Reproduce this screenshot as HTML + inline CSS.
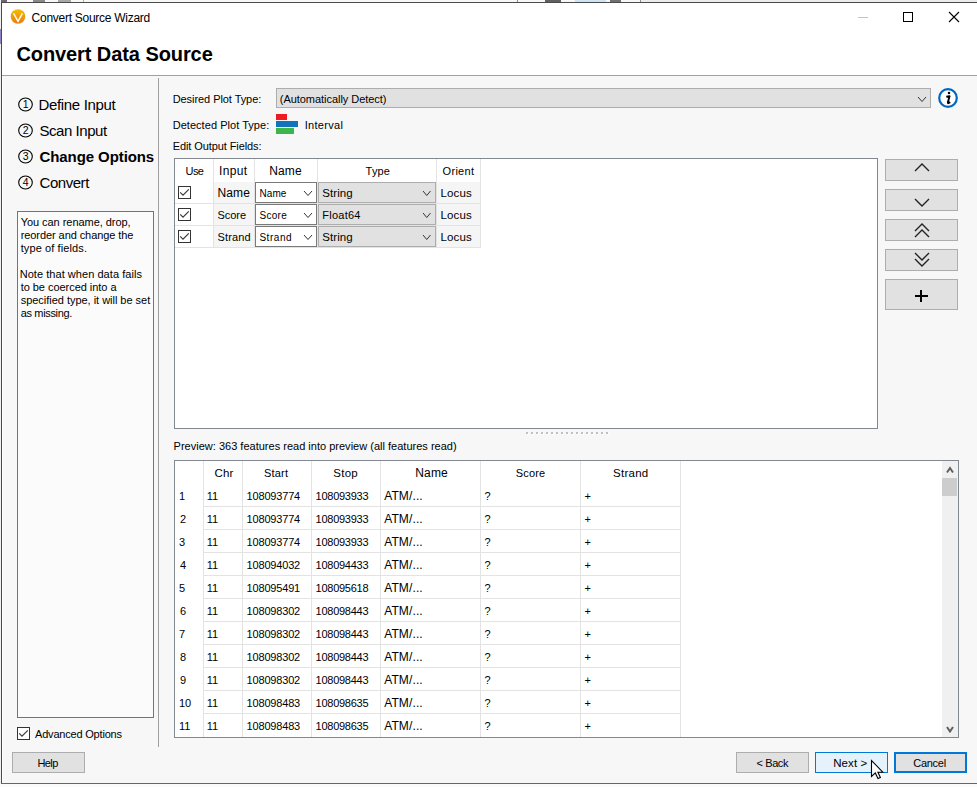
<!DOCTYPE html><html><head><meta charset="utf-8"><style>
html,body{margin:0;padding:0;}
body{width:977px;height:787px;position:relative;overflow:hidden;background:#f0f0f0;font-family:"Liberation Sans",sans-serif;}
.t{position:absolute;white-space:nowrap;line-height:20px;}
.b{position:absolute;box-sizing:border-box;}
</style></head><body>
<div class="b" style="left:0px;top:0px;width:977px;height:2px;background:#f8f8f8;"></div>
<div class="b" style="left:0px;top:0px;width:7px;height:2px;background:#6a6a6a;"></div>
<div class="b" style="left:33px;top:0px;width:12px;height:2px;background:#8a8a8a;"></div>
<div class="b" style="left:58px;top:0px;width:13px;height:2px;background:#a8a8a8;"></div>
<div class="b" style="left:83px;top:0px;width:1px;height:2px;background:#b0b0b0;"></div>
<div class="b" style="left:517px;top:0px;width:1px;height:2px;background:#909090;"></div>
<div class="b" style="left:545px;top:0px;width:16px;height:2px;background:#606060;"></div>
<div class="b" style="left:575px;top:0px;width:31px;height:2px;background:#cde4f7;"></div>
<div class="b" style="left:610px;top:0px;width:11px;height:2px;background:#707070;"></div>
<div class="b" style="left:640px;top:0px;width:1px;height:2px;background:#909090;"></div>
<div class="b" style="left:641px;top:0px;width:336px;height:2px;background:#ececec;"></div>
<div class="b" style="left:0px;top:0px;width:1px;height:787px;background:#f0f0f0;"></div>
<div class="b" style="left:0px;top:29px;width:1px;height:15px;background:#8a84c0;"></div>
<div class="b" style="left:1px;top:2px;width:976px;height:782px;background:#4a4a4a;"></div>
<div class="b" style="left:1px;top:783px;width:976px;height:1px;background:#666666;"></div>
<div class="b" style="left:2px;top:3px;width:975px;height:780px;background:#ffffff;"></div>
<div class="b" style="left:3px;top:76px;width:974px;height:707px;background:#f7f7f7;"></div>
<div class="b" style="left:2px;top:75px;width:975px;height:1px;background:#a0a0a0;"></div>
<div class="b" style="left:0px;top:784px;width:977px;height:3px;background:#fbfbfb;"></div>
<svg class="b" style="left:10px;top:9px" width="16" height="16"><defs><linearGradient id="og" x1="0" y1="0" x2="0" y2="1"><stop offset="0" stop-color="#f6bd00"/><stop offset="1" stop-color="#ea7c12"/></linearGradient></defs><circle cx="8" cy="7.5" r="7.3" fill="url(#og)"/><path d="M3.6 4.3 L8 12.4 L12.4 4.3" fill="none" stroke="#fff" stroke-width="1.4"/></svg>
<div class="t" id="t0" style="left:31.60px;top:8px;font-size:12px;letter-spacing:-0.270px;font-weight:normal;color:#000">Convert Source Wizard</div>
<div class="b" style="left:858px;top:17px;width:10px;height:1px;background:#c2c2c2;"></div>
<svg class="b" style="left:902px;top:11px" width="12" height="12"><rect x="1.5" y="1.5" width="9" height="9" fill="none" stroke="#000" stroke-width="1"/></svg>
<svg class="b" style="left:948px;top:11px" width="12" height="12"><path d="M1 1 L11 11 M11 1 L1 11" stroke="#000" stroke-width="1.1"/></svg>
<div class="t" id="t1" style="left:16.40px;top:44px;font-size:20px;letter-spacing:-0.080px;font-weight:bold;color:#000">Convert Data Source</div>
<svg class="b" style="left:18px;top:96.5px" width="15" height="15"><ellipse cx="7.5" cy="7.5" rx="6.8" ry="6.5" fill="none" stroke="#000" stroke-width="1.1"/><text x="7.6" y="11.3" text-anchor="middle" font-family="Liberation Sans" font-size="10.5">1</text></svg>
<div class="t" id="t2" style="left:38.50px;top:95px;font-size:15px;letter-spacing:-0.335px;font-weight:normal;color:#000">Define Input</div>
<svg class="b" style="left:18px;top:122.5px" width="15" height="15"><ellipse cx="7.5" cy="7.5" rx="6.8" ry="6.5" fill="none" stroke="#000" stroke-width="1.1"/><text x="7.6" y="11.3" text-anchor="middle" font-family="Liberation Sans" font-size="10.5">2</text></svg>
<div class="t" id="t3" style="left:39.50px;top:121px;font-size:15px;letter-spacing:-0.450px;font-weight:normal;color:#000">Scan Input</div>
<svg class="b" style="left:18px;top:148.5px" width="15" height="15"><ellipse cx="7.5" cy="7.5" rx="6.8" ry="6.5" fill="none" stroke="#000" stroke-width="1.1"/><text x="7.6" y="11.3" text-anchor="middle" font-family="Liberation Sans" font-size="10.5">3</text></svg>
<div class="t" id="t4" style="left:39.50px;top:147px;font-size:15px;letter-spacing:-0.086px;font-weight:bold;color:#000">Change Options</div>
<svg class="b" style="left:18px;top:174.5px" width="15" height="15"><ellipse cx="7.5" cy="7.5" rx="6.8" ry="6.5" fill="none" stroke="#000" stroke-width="1.1"/><text x="7.6" y="11.3" text-anchor="middle" font-family="Liberation Sans" font-size="10.5">4</text></svg>
<div class="t" id="t5" style="left:39.50px;top:173px;font-size:15px;letter-spacing:-0.450px;font-weight:normal;color:#000">Convert</div>
<div class="b" style="left:17px;top:211px;width:137px;height:507px;background:#fbfbfb;box-shadow:inset 0 0 0 1px #747474;"></div>
<div class="t" id="t6" style="left:20.70px;top:212px;font-size:11px;letter-spacing:-0.050px;font-weight:normal;color:#000">You can rename, drop,</div>
<div class="t" id="t7" style="left:20.70px;top:225px;font-size:11px;letter-spacing:-0.076px;font-weight:normal;color:#000">reorder and change the</div>
<div class="t" id="t8" style="left:20.70px;top:238px;font-size:11px;letter-spacing:0.104px;font-weight:normal;color:#000">type of fields.</div>
<div class="t" id="t9" style="left:19.70px;top:264px;font-size:11px;letter-spacing:0.048px;font-weight:normal;color:#000">Note that when data fails</div>
<div class="t" id="t10" style="left:20.70px;top:277px;font-size:11px;letter-spacing:-0.041px;font-weight:normal;color:#000">to be coerced into a</div>
<div class="t" id="t11" style="left:20.70px;top:290px;font-size:11px;letter-spacing:-0.025px;font-weight:normal;color:#000">specified type, it will be set</div>
<div class="t" id="t12" style="left:20.70px;top:303px;font-size:11px;letter-spacing:-0.338px;font-weight:normal;color:#000">as missing.</div>
<svg class="b" style="left:17px;top:727px" width="13" height="13"><rect x="0.5" y="0.5" width="12" height="12" fill="#fff" stroke="#333"/><path d="M2.2 6.4 L5 9.2 L10.8 3.4" fill="none" stroke="#3a3a3a" stroke-width="1.2"/></svg>
<div class="t" id="t13" style="left:35.00px;top:724px;font-size:11px;letter-spacing:-0.192px;font-weight:normal;color:#000">Advanced Options</div>
<div class="b" style="left:158px;top:78px;width:1px;height:669px;background:#a0a0a0;"></div>
<div class="b" style="left:12px;top:752px;width:73px;height:21px;background:#e1e1e1;box-shadow:inset 0 0 0 1px #adadad;"></div>
<div class="t" id="t14" style="left:37.50px;top:753px;font-size:11px;letter-spacing:-0.600px;font-weight:normal;color:#000">Help</div>
<div class="b" style="left:736px;top:752px;width:73px;height:21px;background:#e1e1e1;box-shadow:inset 0 0 0 1px #adadad;"></div>
<div class="t" id="t15" style="left:756.50px;top:753px;font-size:11px;letter-spacing:-0.396px;font-weight:normal;color:#000">&lt; Back</div>
<div class="b" style="left:815px;top:752px;width:73px;height:21px;background:#e5f1fb;box-shadow:inset 0 0 0 1px #0078d7;"></div>
<div class="t" id="t16" style="left:833.20px;top:753px;font-size:11.5px;letter-spacing:0.096px;font-weight:normal;color:#000">Next &gt;</div>
<div class="b" style="left:894px;top:752px;width:73px;height:21px;background:#e1e1e1;box-shadow:inset 0 0 0 2px #0078d7;"></div>
<div class="t" id="t17" style="left:913.30px;top:753px;font-size:11px;letter-spacing:-0.288px;font-weight:normal;color:#000">Cancel</div>
<svg class="b" style="left:868px;top:757px" width="20" height="25"><path d="M3.5 3.5 L3.5 19.5 L7.3 15.9 L10 21.5 L12.4 20.5 L9.9 15.2 L14.8 15.2 Z" fill="#fff" stroke="#000" stroke-width="1.1" stroke-linejoin="miter"/></svg>
<div class="t" id="t18" style="left:172.70px;top:89px;font-size:11px;letter-spacing:-0.064px;font-weight:normal;color:#000">Desired Plot Type:</div>
<div class="b" style="left:276px;top:88px;width:655px;height:20px;background:#e1e1e1;box-shadow:inset 0 0 0 1px #adadad;"></div>
<div class="t" id="t19" style="left:279.80px;top:89px;font-size:11px;letter-spacing:-0.043px;font-weight:normal;color:#000">(Automatically Detect)</div>
<svg class="b" style="left:916.0px;top:94.75px" width="12" height="8.5"><path d="M2 2 L6.0 6.5 L10 2" fill="none" stroke="#333" stroke-width="1.0"/></svg>
<svg class="b" style="left:938px;top:88px" width="20" height="20"><circle cx="10" cy="10" r="8.8" fill="#fff" stroke="#0067c0" stroke-width="2.2"/><circle cx="11.0" cy="5.1" r="1.25" fill="#000"/><path d="M8.3 8.7 L11.6 8.1 L9.9 14.3 Q9.6 15.6 10.8 15.0 L12.2 14.1" fill="none" stroke="#000" stroke-width="1.9" stroke-linejoin="round"/></svg>
<div class="t" id="t20" style="left:172.70px;top:115px;font-size:11px;letter-spacing:0.040px;font-weight:normal;color:#000">Detected Plot Type:</div>
<div class="b" style="left:276px;top:114px;width:11px;height:6px;background:#ed1c24;"></div>
<div class="b" style="left:276px;top:121px;width:22px;height:6px;background:#1273bb;"></div>
<div class="b" style="left:276px;top:128px;width:18px;height:6px;background:#3cb54a;"></div>
<div class="t" id="t21" style="left:304.70px;top:115px;font-size:11px;letter-spacing:0.309px;font-weight:normal;color:#000">Interval</div>
<div class="t" id="t22" style="left:172.70px;top:136px;font-size:11px;letter-spacing:-0.090px;font-weight:normal;color:#000">Edit Output Fields:</div>
<div class="b" style="left:174px;top:158px;width:704px;height:271px;background:#fff;box-shadow:inset 0 0 0 1px #828790;"></div>
<div class="b" style="left:213px;top:159px;width:1px;height:89px;background:#e3e3e3;"></div>
<div class="b" style="left:254px;top:159px;width:1px;height:89px;background:#e3e3e3;"></div>
<div class="b" style="left:317px;top:159px;width:1px;height:89px;background:#e3e3e3;"></div>
<div class="b" style="left:436px;top:159px;width:1px;height:89px;background:#e3e3e3;"></div>
<div class="b" style="left:480px;top:159px;width:1px;height:89px;background:#e3e3e3;"></div>
<div class="b" style="left:214px;top:182px;width:40px;height:21px;background:#f5f5f5;"></div>
<div class="b" style="left:437px;top:182px;width:43px;height:21px;background:#f5f5f5;"></div>
<div class="b" style="left:175px;top:203px;width:306px;height:1px;background:#e3e3e3;"></div>
<div class="b" style="left:214px;top:204px;width:40px;height:21px;background:#f5f5f5;"></div>
<div class="b" style="left:437px;top:204px;width:43px;height:21px;background:#f5f5f5;"></div>
<div class="b" style="left:175px;top:225px;width:306px;height:1px;background:#e3e3e3;"></div>
<div class="b" style="left:214px;top:226px;width:40px;height:21px;background:#f5f5f5;"></div>
<div class="b" style="left:437px;top:226px;width:43px;height:21px;background:#f5f5f5;"></div>
<div class="b" style="left:175px;top:247px;width:306px;height:1px;background:#e3e3e3;"></div>
<div class="t" id="t23" style="left:185.60px;top:161px;font-size:11px;letter-spacing:-0.630px;font-weight:normal;color:#000">Use</div>
<div class="t" id="t24" style="left:219.00px;top:161px;font-size:12px;letter-spacing:0.345px;font-weight:normal;color:#000">Input</div>
<div class="t" id="t25" style="left:269.20px;top:161px;font-size:12px;letter-spacing:0.120px;font-weight:normal;color:#000">Name</div>
<div class="t" id="t26" style="left:365.60px;top:161px;font-size:11px;letter-spacing:0.180px;font-weight:normal;color:#000">Type</div>
<div class="t" id="t27" style="left:442.60px;top:161px;font-size:11px;letter-spacing:0.288px;font-weight:normal;color:#000">Orient</div>
<svg class="b" style="left:178px;top:186px" width="13" height="13"><rect x="0.5" y="0.5" width="12" height="12" fill="#fff" stroke="#333"/><path d="M2.2 6.4 L5 9.2 L10.8 3.4" fill="none" stroke="#3a3a3a" stroke-width="1.2"/></svg>
<div class="t" id="t28" style="left:217.50px;top:183px;font-size:12px;letter-spacing:0.120px;font-weight:normal;color:#000">Name</div>
<div class="b" style="left:255px;top:182px;width:62px;height:21px;background:#fff;box-shadow:inset 0 0 0 1px #7a7a7a;"></div>
<div class="t" id="t29" style="left:259.40px;top:184px;font-size:10px;letter-spacing:0.120px;font-weight:normal;color:#000">Name</div>
<svg class="b" style="left:302.0px;top:188.75px" width="12" height="8.5"><path d="M2 2 L6.0 6.5 L10 2" fill="none" stroke="#333" stroke-width="1.0"/></svg>
<div class="b" style="left:318px;top:182px;width:118px;height:21px;background:#e1e1e1;box-shadow:inset 0 0 0 1px #adadad;"></div>
<div class="t" id="t30" style="left:322.30px;top:183px;font-size:11.5px;letter-spacing:0.060px;font-weight:normal;color:#000">String</div>
<svg class="b" style="left:421.25px;top:188.75px" width="11.5" height="8.5"><path d="M2 2 L5.75 6.5 L9.5 2" fill="none" stroke="#333" stroke-width="1.0"/></svg>
<div class="t" id="t31" style="left:440.40px;top:183px;font-size:11.5px;letter-spacing:0.195px;font-weight:normal;color:#000">Locus</div>
<svg class="b" style="left:178px;top:208px" width="13" height="13"><rect x="0.5" y="0.5" width="12" height="12" fill="#fff" stroke="#333"/><path d="M2.2 6.4 L5 9.2 L10.8 3.4" fill="none" stroke="#3a3a3a" stroke-width="1.2"/></svg>
<div class="t" id="t32" style="left:217.50px;top:205px;font-size:11px;letter-spacing:-0.045px;font-weight:normal;color:#000">Score</div>
<div class="b" style="left:255px;top:204px;width:62px;height:21px;background:#fff;box-shadow:inset 0 0 0 1px #7a7a7a;"></div>
<div class="t" id="t33" style="left:259.40px;top:206px;font-size:10px;letter-spacing:0.315px;font-weight:normal;color:#000">Score</div>
<svg class="b" style="left:302.0px;top:210.75px" width="12" height="8.5"><path d="M2 2 L6.0 6.5 L10 2" fill="none" stroke="#333" stroke-width="1.0"/></svg>
<div class="b" style="left:318px;top:204px;width:118px;height:21px;background:#e1e1e1;box-shadow:inset 0 0 0 1px #adadad;"></div>
<div class="t" id="t34" style="left:322.30px;top:205px;font-size:11px;letter-spacing:0.240px;font-weight:normal;color:#000">Float64</div>
<svg class="b" style="left:421.25px;top:210.75px" width="11.5" height="8.5"><path d="M2 2 L5.75 6.5 L9.5 2" fill="none" stroke="#333" stroke-width="1.0"/></svg>
<div class="t" id="t35" style="left:440.40px;top:205px;font-size:11.5px;letter-spacing:0.195px;font-weight:normal;color:#000">Locus</div>
<svg class="b" style="left:178px;top:230px" width="13" height="13"><rect x="0.5" y="0.5" width="12" height="12" fill="#fff" stroke="#333"/><path d="M2.2 6.4 L5 9.2 L10.8 3.4" fill="none" stroke="#3a3a3a" stroke-width="1.2"/></svg>
<div class="t" id="t36" style="left:217.50px;top:227px;font-size:11px;letter-spacing:0.144px;font-weight:normal;color:#000">Strand</div>
<div class="b" style="left:255px;top:226px;width:62px;height:21px;background:#fff;box-shadow:inset 0 0 0 1px #7a7a7a;"></div>
<div class="t" id="t37" style="left:259.40px;top:228px;font-size:10px;letter-spacing:0.540px;font-weight:normal;color:#000">Strand</div>
<svg class="b" style="left:302.0px;top:232.75px" width="12" height="8.5"><path d="M2 2 L6.0 6.5 L10 2" fill="none" stroke="#333" stroke-width="1.0"/></svg>
<div class="b" style="left:318px;top:226px;width:118px;height:21px;background:#e1e1e1;box-shadow:inset 0 0 0 1px #adadad;"></div>
<div class="t" id="t38" style="left:322.30px;top:227px;font-size:11.5px;letter-spacing:0.060px;font-weight:normal;color:#000">String</div>
<svg class="b" style="left:421.25px;top:232.75px" width="11.5" height="8.5"><path d="M2 2 L5.75 6.5 L9.5 2" fill="none" stroke="#333" stroke-width="1.0"/></svg>
<div class="t" id="t39" style="left:440.40px;top:227px;font-size:11.5px;letter-spacing:0.195px;font-weight:normal;color:#000">Locus</div>
<div class="b" style="left:885px;top:159px;width:73px;height:22px;background:#e1e1e1;box-shadow:inset 0 0 0 1px #adadad;"></div>
<div class="b" style="left:885px;top:189px;width:73px;height:22px;background:#e1e1e1;box-shadow:inset 0 0 0 1px #adadad;"></div>
<div class="b" style="left:885px;top:219px;width:73px;height:22px;background:#e1e1e1;box-shadow:inset 0 0 0 1px #adadad;"></div>
<div class="b" style="left:885px;top:249px;width:73px;height:22px;background:#e1e1e1;box-shadow:inset 0 0 0 1px #adadad;"></div>
<div class="b" style="left:885px;top:279px;width:73px;height:31px;background:#e1e1e1;box-shadow:inset 0 0 0 1px #adadad;"></div>
<svg class="b" style="left:912.5px;top:162.0px" width="18" height="11"><path d="M2 9 L9.0 2 L16 9" fill="none" stroke="#222" stroke-width="1.4"/></svg>
<svg class="b" style="left:912.5px;top:197.0px" width="18" height="11"><path d="M2 2 L9.0 9 L16 2" fill="none" stroke="#222" stroke-width="1.4"/></svg>
<svg class="b" style="left:912.5px;top:221.5px" width="18" height="11"><path d="M2 9 L9.0 2 L16 9" fill="none" stroke="#222" stroke-width="1.4"/></svg>
<svg class="b" style="left:912.5px;top:227.5px" width="18" height="11"><path d="M2 9 L9.0 2 L16 9" fill="none" stroke="#222" stroke-width="1.4"/></svg>
<svg class="b" style="left:912.5px;top:251.0px" width="18" height="11"><path d="M2 2 L9.0 9 L16 2" fill="none" stroke="#222" stroke-width="1.4"/></svg>
<svg class="b" style="left:912.5px;top:257.0px" width="18" height="11"><path d="M2 2 L9.0 9 L16 2" fill="none" stroke="#222" stroke-width="1.4"/></svg>
<div class="b" style="left:915px;top:295px;width:13px;height:2px;background:#000;"></div>
<div class="b" style="left:920px;top:290px;width:2px;height:12px;background:#000;"></div>
<div class="b" style="left:527px;top:433px;width:2px;height:2px;background:#ffffff;"></div>
<div class="b" style="left:526px;top:432px;width:2px;height:2px;background:#c0c0c0;"></div>
<div class="b" style="left:532px;top:433px;width:2px;height:2px;background:#ffffff;"></div>
<div class="b" style="left:531px;top:432px;width:2px;height:2px;background:#c0c0c0;"></div>
<div class="b" style="left:537px;top:433px;width:2px;height:2px;background:#ffffff;"></div>
<div class="b" style="left:536px;top:432px;width:2px;height:2px;background:#c0c0c0;"></div>
<div class="b" style="left:542px;top:433px;width:2px;height:2px;background:#ffffff;"></div>
<div class="b" style="left:541px;top:432px;width:2px;height:2px;background:#c0c0c0;"></div>
<div class="b" style="left:547px;top:433px;width:2px;height:2px;background:#ffffff;"></div>
<div class="b" style="left:546px;top:432px;width:2px;height:2px;background:#c0c0c0;"></div>
<div class="b" style="left:552px;top:433px;width:2px;height:2px;background:#ffffff;"></div>
<div class="b" style="left:551px;top:432px;width:2px;height:2px;background:#c0c0c0;"></div>
<div class="b" style="left:557px;top:433px;width:2px;height:2px;background:#ffffff;"></div>
<div class="b" style="left:556px;top:432px;width:2px;height:2px;background:#c0c0c0;"></div>
<div class="b" style="left:562px;top:433px;width:2px;height:2px;background:#ffffff;"></div>
<div class="b" style="left:561px;top:432px;width:2px;height:2px;background:#c0c0c0;"></div>
<div class="b" style="left:567px;top:433px;width:2px;height:2px;background:#ffffff;"></div>
<div class="b" style="left:566px;top:432px;width:2px;height:2px;background:#c0c0c0;"></div>
<div class="b" style="left:572px;top:433px;width:2px;height:2px;background:#ffffff;"></div>
<div class="b" style="left:571px;top:432px;width:2px;height:2px;background:#c0c0c0;"></div>
<div class="b" style="left:577px;top:433px;width:2px;height:2px;background:#ffffff;"></div>
<div class="b" style="left:576px;top:432px;width:2px;height:2px;background:#c0c0c0;"></div>
<div class="b" style="left:582px;top:433px;width:2px;height:2px;background:#ffffff;"></div>
<div class="b" style="left:581px;top:432px;width:2px;height:2px;background:#c0c0c0;"></div>
<div class="b" style="left:587px;top:433px;width:2px;height:2px;background:#ffffff;"></div>
<div class="b" style="left:586px;top:432px;width:2px;height:2px;background:#c0c0c0;"></div>
<div class="b" style="left:592px;top:433px;width:2px;height:2px;background:#ffffff;"></div>
<div class="b" style="left:591px;top:432px;width:2px;height:2px;background:#c0c0c0;"></div>
<div class="b" style="left:597px;top:433px;width:2px;height:2px;background:#ffffff;"></div>
<div class="b" style="left:596px;top:432px;width:2px;height:2px;background:#c0c0c0;"></div>
<div class="b" style="left:602px;top:433px;width:2px;height:2px;background:#ffffff;"></div>
<div class="b" style="left:601px;top:432px;width:2px;height:2px;background:#c0c0c0;"></div>
<div class="b" style="left:607px;top:433px;width:2px;height:2px;background:#ffffff;"></div>
<div class="b" style="left:606px;top:432px;width:2px;height:2px;background:#c0c0c0;"></div>
<div class="t" id="t40" style="left:173.60px;top:436px;font-size:11px;letter-spacing:0.009px;font-weight:normal;color:#000">Preview: 363 features read into preview (all features read)</div>
<div class="b" style="left:174px;top:460px;width:785px;height:278px;background:#fff;box-shadow:inset 0 0 0 1px #828790;"></div>
<div class="b" style="left:203px;top:461px;width:1px;height:276px;background:#e3e3e3;"></div>
<div class="b" style="left:242px;top:461px;width:1px;height:276px;background:#e3e3e3;"></div>
<div class="b" style="left:311px;top:461px;width:1px;height:276px;background:#e3e3e3;"></div>
<div class="b" style="left:380px;top:461px;width:1px;height:276px;background:#e3e3e3;"></div>
<div class="b" style="left:480px;top:461px;width:1px;height:276px;background:#e3e3e3;"></div>
<div class="b" style="left:580px;top:461px;width:1px;height:276px;background:#e3e3e3;"></div>
<div class="b" style="left:680px;top:461px;width:1px;height:276px;background:#e3e3e3;"></div>
<div class="b" style="left:203px;top:506px;width:478px;height:1px;background:#e3e3e3;"></div>
<div class="b" style="left:203px;top:529px;width:478px;height:1px;background:#e3e3e3;"></div>
<div class="b" style="left:203px;top:552px;width:478px;height:1px;background:#e3e3e3;"></div>
<div class="b" style="left:203px;top:575px;width:478px;height:1px;background:#e3e3e3;"></div>
<div class="b" style="left:203px;top:598px;width:478px;height:1px;background:#e3e3e3;"></div>
<div class="b" style="left:203px;top:621px;width:478px;height:1px;background:#e3e3e3;"></div>
<div class="b" style="left:203px;top:644px;width:478px;height:1px;background:#e3e3e3;"></div>
<div class="b" style="left:203px;top:667px;width:478px;height:1px;background:#e3e3e3;"></div>
<div class="b" style="left:203px;top:690px;width:478px;height:1px;background:#e3e3e3;"></div>
<div class="b" style="left:203px;top:713px;width:478px;height:1px;background:#e3e3e3;"></div>
<div class="t" id="t41" style="left:214.50px;top:463px;font-size:11.5px;letter-spacing:0.150px;font-weight:normal;color:#000">Chr</div>
<div class="t" id="t42" style="left:264.00px;top:463px;font-size:11px;letter-spacing:0.180px;font-weight:normal;color:#000">Start</div>
<div class="t" id="t43" style="left:333.20px;top:463px;font-size:11.5px;letter-spacing:0.300px;font-weight:normal;color:#000">Stop</div>
<div class="t" id="t44" style="left:415.30px;top:463px;font-size:12px;letter-spacing:0.120px;font-weight:normal;color:#000">Name</div>
<div class="t" id="t45" style="left:515.80px;top:463px;font-size:11px;letter-spacing:0.135px;font-weight:normal;color:#000">Score</div>
<div class="t" id="t46" style="left:613.00px;top:463px;font-size:11.5px;letter-spacing:0.276px;font-weight:normal;color:#000">Strand</div>
<div class="t" id="t47" style="left:179.00px;top:486px;font-size:11px;letter-spacing:0.000px;font-weight:normal;color:#000">1</div>
<div class="t" id="t48" style="left:206.70px;top:486px;font-size:11px;letter-spacing:0.000px;font-weight:normal;color:#000">11</div>
<div class="t" id="t49" style="left:246.60px;top:486px;font-size:11px;letter-spacing:-0.180px;font-weight:normal;color:#000">108093774</div>
<div class="t" id="t50" style="left:315.60px;top:486px;font-size:11px;letter-spacing:-0.270px;font-weight:normal;color:#000">108093933</div>
<div class="t" id="t51" style="left:384.20px;top:486px;font-size:12px;letter-spacing:0.120px;font-weight:normal;color:#000">ATM/...</div>
<div class="t" id="t52" style="left:484.60px;top:486px;font-size:11px;letter-spacing:0.000px;font-weight:normal;color:#000">?</div>
<div class="t" id="t53" style="left:584.50px;top:486px;font-size:11px;letter-spacing:0.000px;font-weight:normal;color:#000">+</div>
<div class="t" id="t54" style="left:180.00px;top:509px;font-size:11px;letter-spacing:0.000px;font-weight:normal;color:#000">2</div>
<div class="t" id="t55" style="left:206.70px;top:509px;font-size:11px;letter-spacing:0.000px;font-weight:normal;color:#000">11</div>
<div class="t" id="t56" style="left:246.60px;top:509px;font-size:11px;letter-spacing:-0.180px;font-weight:normal;color:#000">108093774</div>
<div class="t" id="t57" style="left:315.60px;top:509px;font-size:11px;letter-spacing:-0.270px;font-weight:normal;color:#000">108093933</div>
<div class="t" id="t58" style="left:384.20px;top:509px;font-size:12px;letter-spacing:0.120px;font-weight:normal;color:#000">ATM/...</div>
<div class="t" id="t59" style="left:484.60px;top:509px;font-size:11px;letter-spacing:0.000px;font-weight:normal;color:#000">?</div>
<div class="t" id="t60" style="left:584.50px;top:509px;font-size:11px;letter-spacing:0.000px;font-weight:normal;color:#000">+</div>
<div class="t" id="t61" style="left:179.00px;top:532px;font-size:11px;letter-spacing:0.000px;font-weight:normal;color:#000">3</div>
<div class="t" id="t62" style="left:206.70px;top:532px;font-size:11px;letter-spacing:0.000px;font-weight:normal;color:#000">11</div>
<div class="t" id="t63" style="left:246.60px;top:532px;font-size:11px;letter-spacing:-0.180px;font-weight:normal;color:#000">108093774</div>
<div class="t" id="t64" style="left:315.60px;top:532px;font-size:11px;letter-spacing:-0.270px;font-weight:normal;color:#000">108093933</div>
<div class="t" id="t65" style="left:384.20px;top:532px;font-size:12px;letter-spacing:0.120px;font-weight:normal;color:#000">ATM/...</div>
<div class="t" id="t66" style="left:484.60px;top:532px;font-size:11px;letter-spacing:0.000px;font-weight:normal;color:#000">?</div>
<div class="t" id="t67" style="left:584.50px;top:532px;font-size:11px;letter-spacing:0.000px;font-weight:normal;color:#000">+</div>
<div class="t" id="t68" style="left:180.00px;top:555px;font-size:11px;letter-spacing:0.000px;font-weight:normal;color:#000">4</div>
<div class="t" id="t69" style="left:206.70px;top:555px;font-size:11px;letter-spacing:0.000px;font-weight:normal;color:#000">11</div>
<div class="t" id="t70" style="left:246.60px;top:555px;font-size:11px;letter-spacing:-0.180px;font-weight:normal;color:#000">108094032</div>
<div class="t" id="t71" style="left:315.60px;top:555px;font-size:11px;letter-spacing:-0.270px;font-weight:normal;color:#000">108094433</div>
<div class="t" id="t72" style="left:384.20px;top:555px;font-size:12px;letter-spacing:0.120px;font-weight:normal;color:#000">ATM/...</div>
<div class="t" id="t73" style="left:484.60px;top:555px;font-size:11px;letter-spacing:0.000px;font-weight:normal;color:#000">?</div>
<div class="t" id="t74" style="left:584.50px;top:555px;font-size:11px;letter-spacing:0.000px;font-weight:normal;color:#000">+</div>
<div class="t" id="t75" style="left:179.00px;top:578px;font-size:11px;letter-spacing:0.000px;font-weight:normal;color:#000">5</div>
<div class="t" id="t76" style="left:206.70px;top:578px;font-size:11px;letter-spacing:0.000px;font-weight:normal;color:#000">11</div>
<div class="t" id="t77" style="left:246.60px;top:578px;font-size:11px;letter-spacing:-0.180px;font-weight:normal;color:#000">108095491</div>
<div class="t" id="t78" style="left:315.60px;top:578px;font-size:11px;letter-spacing:-0.270px;font-weight:normal;color:#000">108095618</div>
<div class="t" id="t79" style="left:384.20px;top:578px;font-size:12px;letter-spacing:0.120px;font-weight:normal;color:#000">ATM/...</div>
<div class="t" id="t80" style="left:484.60px;top:578px;font-size:11px;letter-spacing:0.000px;font-weight:normal;color:#000">?</div>
<div class="t" id="t81" style="left:584.50px;top:578px;font-size:11px;letter-spacing:0.000px;font-weight:normal;color:#000">+</div>
<div class="t" id="t82" style="left:180.00px;top:601px;font-size:11px;letter-spacing:0.000px;font-weight:normal;color:#000">6</div>
<div class="t" id="t83" style="left:206.70px;top:601px;font-size:11px;letter-spacing:0.000px;font-weight:normal;color:#000">11</div>
<div class="t" id="t84" style="left:246.60px;top:601px;font-size:11px;letter-spacing:-0.180px;font-weight:normal;color:#000">108098302</div>
<div class="t" id="t85" style="left:315.60px;top:601px;font-size:11px;letter-spacing:-0.270px;font-weight:normal;color:#000">108098443</div>
<div class="t" id="t86" style="left:384.20px;top:601px;font-size:12px;letter-spacing:0.120px;font-weight:normal;color:#000">ATM/...</div>
<div class="t" id="t87" style="left:484.60px;top:601px;font-size:11px;letter-spacing:0.000px;font-weight:normal;color:#000">?</div>
<div class="t" id="t88" style="left:584.50px;top:601px;font-size:11px;letter-spacing:0.000px;font-weight:normal;color:#000">+</div>
<div class="t" id="t89" style="left:179.00px;top:624px;font-size:11px;letter-spacing:0.000px;font-weight:normal;color:#000">7</div>
<div class="t" id="t90" style="left:206.70px;top:624px;font-size:11px;letter-spacing:0.000px;font-weight:normal;color:#000">11</div>
<div class="t" id="t91" style="left:246.60px;top:624px;font-size:11px;letter-spacing:-0.180px;font-weight:normal;color:#000">108098302</div>
<div class="t" id="t92" style="left:315.60px;top:624px;font-size:11px;letter-spacing:-0.270px;font-weight:normal;color:#000">108098443</div>
<div class="t" id="t93" style="left:384.20px;top:624px;font-size:12px;letter-spacing:0.120px;font-weight:normal;color:#000">ATM/...</div>
<div class="t" id="t94" style="left:484.60px;top:624px;font-size:11px;letter-spacing:0.000px;font-weight:normal;color:#000">?</div>
<div class="t" id="t95" style="left:584.50px;top:624px;font-size:11px;letter-spacing:0.000px;font-weight:normal;color:#000">+</div>
<div class="t" id="t96" style="left:180.00px;top:647px;font-size:11px;letter-spacing:0.000px;font-weight:normal;color:#000">8</div>
<div class="t" id="t97" style="left:206.70px;top:647px;font-size:11px;letter-spacing:0.000px;font-weight:normal;color:#000">11</div>
<div class="t" id="t98" style="left:246.60px;top:647px;font-size:11px;letter-spacing:-0.180px;font-weight:normal;color:#000">108098302</div>
<div class="t" id="t99" style="left:315.60px;top:647px;font-size:11px;letter-spacing:-0.270px;font-weight:normal;color:#000">108098443</div>
<div class="t" id="t100" style="left:384.20px;top:647px;font-size:12px;letter-spacing:0.120px;font-weight:normal;color:#000">ATM/...</div>
<div class="t" id="t101" style="left:484.60px;top:647px;font-size:11px;letter-spacing:0.000px;font-weight:normal;color:#000">?</div>
<div class="t" id="t102" style="left:584.50px;top:647px;font-size:11px;letter-spacing:0.000px;font-weight:normal;color:#000">+</div>
<div class="t" id="t103" style="left:180.00px;top:670px;font-size:11px;letter-spacing:0.000px;font-weight:normal;color:#000">9</div>
<div class="t" id="t104" style="left:206.70px;top:670px;font-size:11px;letter-spacing:0.000px;font-weight:normal;color:#000">11</div>
<div class="t" id="t105" style="left:246.60px;top:670px;font-size:11px;letter-spacing:-0.180px;font-weight:normal;color:#000">108098302</div>
<div class="t" id="t106" style="left:315.60px;top:670px;font-size:11px;letter-spacing:-0.270px;font-weight:normal;color:#000">108098443</div>
<div class="t" id="t107" style="left:384.20px;top:670px;font-size:12px;letter-spacing:0.120px;font-weight:normal;color:#000">ATM/...</div>
<div class="t" id="t108" style="left:484.60px;top:670px;font-size:11px;letter-spacing:0.000px;font-weight:normal;color:#000">?</div>
<div class="t" id="t109" style="left:584.50px;top:670px;font-size:11px;letter-spacing:0.000px;font-weight:normal;color:#000">+</div>
<div class="t" id="t110" style="left:179.00px;top:693px;font-size:11px;letter-spacing:0.000px;font-weight:normal;color:#000">10</div>
<div class="t" id="t111" style="left:206.70px;top:693px;font-size:11px;letter-spacing:0.000px;font-weight:normal;color:#000">11</div>
<div class="t" id="t112" style="left:246.60px;top:693px;font-size:11px;letter-spacing:-0.180px;font-weight:normal;color:#000">108098483</div>
<div class="t" id="t113" style="left:315.60px;top:693px;font-size:11px;letter-spacing:-0.270px;font-weight:normal;color:#000">108098635</div>
<div class="t" id="t114" style="left:384.20px;top:693px;font-size:12px;letter-spacing:0.120px;font-weight:normal;color:#000">ATM/...</div>
<div class="t" id="t115" style="left:484.60px;top:693px;font-size:11px;letter-spacing:0.000px;font-weight:normal;color:#000">?</div>
<div class="t" id="t116" style="left:584.50px;top:693px;font-size:11px;letter-spacing:0.000px;font-weight:normal;color:#000">+</div>
<div class="t" id="t117" style="left:179.00px;top:716px;font-size:11px;letter-spacing:0.000px;font-weight:normal;color:#000">11</div>
<div class="t" id="t118" style="left:206.70px;top:716px;font-size:11px;letter-spacing:0.000px;font-weight:normal;color:#000">11</div>
<div class="t" id="t119" style="left:246.60px;top:716px;font-size:11px;letter-spacing:-0.180px;font-weight:normal;color:#000">108098483</div>
<div class="t" id="t120" style="left:315.60px;top:716px;font-size:11px;letter-spacing:-0.270px;font-weight:normal;color:#000">108098635</div>
<div class="t" id="t121" style="left:384.20px;top:716px;font-size:12px;letter-spacing:0.120px;font-weight:normal;color:#000">ATM/...</div>
<div class="t" id="t122" style="left:484.60px;top:716px;font-size:11px;letter-spacing:0.000px;font-weight:normal;color:#000">?</div>
<div class="t" id="t123" style="left:584.50px;top:716px;font-size:11px;letter-spacing:0.000px;font-weight:normal;color:#000">+</div>
<div class="b" style="left:942px;top:461px;width:16px;height:276px;background:#f0f0f0;"></div>
<div class="b" style="left:942px;top:478px;width:15px;height:18px;background:#cdcdcd;"></div>
<svg class="b" style="left:944.5px;top:465.75px" width="10" height="8.5"><path d="M2 6.5 L5.0 2 L8 6.5" fill="none" stroke="#606060" stroke-width="2"/></svg>
<svg class="b" style="left:944.5px;top:724.75px" width="10" height="8.5"><path d="M2 2 L5.0 6.5 L8 2" fill="none" stroke="#606060" stroke-width="2"/></svg>
</body></html>
